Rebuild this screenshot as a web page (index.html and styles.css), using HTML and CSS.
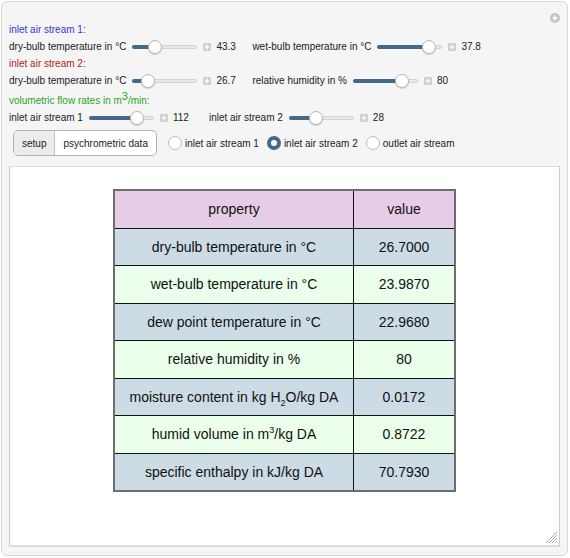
FILE: index.html
```html
<!DOCTYPE html>
<html lang="en">
<head>
    <meta charset="UTF-8">
    <title>Psychrometric Data</title>
    <link rel="stylesheet" href="styles.css">
</head>
<body>
    <div class="panel">
        <svg class="add-btn" width="10" height="10" viewBox="0 0 10 10">
            <circle cx="5" cy="5" r="5" fill="#c4c4c4"/>
            <path d="M5 2.5v5M2.5 5h5" stroke="#fff" stroke-width="1.6"/>
        </svg>

        <div class="controls">
            <div class="heading blue">inlet air stream 1:</div>
            <div class="row">
                <div class="control">
                    <span class="label">dry-bulb temperature in °C</span>
                    <div class="slider"><div class="fill" style="width:23px"></div><div class="thumb" style="left:16px"></div></div>
                    <svg class="plus" width="8" height="8" viewBox="0 0 8 8"><rect width="8" height="8" rx="1" fill="#cfcfcf"/><path d="M4 1.5v5M1.5 4h5" stroke="#fff" stroke-width="1.2"/></svg>
                    <span class="value">43.3</span>
                </div>
                <div class="control">
                    <span class="label">wet-bulb temperature in °C</span>
                    <div class="slider"><div class="fill" style="width:52px"></div><div class="thumb" style="left:45px"></div></div>
                    <svg class="plus" width="8" height="8" viewBox="0 0 8 8"><rect width="8" height="8" rx="1" fill="#cfcfcf"/><path d="M4 1.5v5M1.5 4h5" stroke="#fff" stroke-width="1.2"/></svg>
                    <span class="value">37.8</span>
                </div>
            </div>

            <div class="heading red">inlet air stream 2:</div>
            <div class="row">
                <div class="control">
                    <span class="label">dry-bulb temperature in °C</span>
                    <div class="slider"><div class="fill" style="width:16px"></div><div class="thumb" style="left:9px"></div></div>
                    <svg class="plus" width="8" height="8" viewBox="0 0 8 8"><rect width="8" height="8" rx="1" fill="#cfcfcf"/><path d="M4 1.5v5M1.5 4h5" stroke="#fff" stroke-width="1.2"/></svg>
                    <span class="value">26.7</span>
                </div>
                <div class="control">
                    <span class="label">relative humidity in %</span>
                    <div class="slider"><div class="fill" style="width:49px"></div><div class="thumb" style="left:42px"></div></div>
                    <svg class="plus" width="8" height="8" viewBox="0 0 8 8"><rect width="8" height="8" rx="1" fill="#cfcfcf"/><path d="M4 1.5v5M1.5 4h5" stroke="#fff" stroke-width="1.2"/></svg>
                    <span class="value">80</span>
                </div>
            </div>

            <div class="heading green flow">volumetric flow rates in m<sup>3</sup>/min:</div>
            <div class="row">
                <div class="control">
                    <span class="label">inlet air stream 1</span>
                    <div class="slider"><div class="fill" style="width:48px"></div><div class="thumb" style="left:41px"></div></div>
                    <svg class="plus" width="8" height="8" viewBox="0 0 8 8"><rect width="8" height="8" rx="1" fill="#cfcfcf"/><path d="M4 1.5v5M1.5 4h5" stroke="#fff" stroke-width="1.2"/></svg>
                    <span class="value">112</span>
                </div>
                <div class="control">
                    <span class="label">inlet air stream 2</span>
                    <div class="slider"><div class="fill" style="width:27px"></div><div class="thumb" style="left:20px"></div></div>
                    <svg class="plus" width="8" height="8" viewBox="0 0 8 8"><rect width="8" height="8" rx="1" fill="#cfcfcf"/><path d="M4 1.5v5M1.5 4h5" stroke="#fff" stroke-width="1.2"/></svg>
                    <span class="value">28</span>
                </div>
            </div>
        </div>

        <div class="tabs-row">
            <div class="tabs">
                <span class="tab tab-setup">setup</span>
                <span class="tab">psychrometric data</span>
            </div>
            <div class="radios">
                <span class="radio"><span class="circle"></span>inlet air stream 1</span>
                <span class="radio"><span class="circle checked"></span>inlet air stream 2</span>
                <span class="radio"><span class="circle"></span>outlet air stream</span>
            </div>
        </div>

        <div class="output">
            <table class="data">
                <tr class="head"><td>property</td><td class="val">value</td></tr>
                <tr class="blue-row"><td>dry-bulb temperature in °C</td><td class="val">26.7000</td></tr>
                <tr class="green-row"><td>wet-bulb temperature in °C</td><td class="val">23.9870</td></tr>
                <tr class="blue-row"><td>dew point temperature in °C</td><td class="val">22.9680</td></tr>
                <tr class="green-row"><td>relative humidity in %</td><td class="val">80</td></tr>
                <tr class="blue-row"><td>moisture content in kg H<sub>2</sub>O/kg DA</td><td class="val">0.0172</td></tr>
                <tr class="green-row"><td>humid volume in m<sup>3</sup>/kg DA</td><td class="val">0.8722</td></tr>
                <tr class="blue-row"><td>specific enthalpy in kJ/kg DA</td><td class="val">70.7930</td></tr>
            </table>
            <svg class="grip" width="12" height="12" viewBox="0 0 12 12">
                <path d="M11 3L3 11M11 6L6 11M11 9L9 11M11 0L0 11" stroke="#aaa" stroke-width="1"/>
            </svg>
        </div>
    </div>
</body>
</html>
```

FILE: styles.css
```css
body {
    margin: 0;
    font-family: 'Liberation Sans', Arial, sans-serif;
    background-color: #ffffff;
}
.panel {
    position: relative;
    box-sizing: border-box;
    width: 567px;
    height: 555px;
    margin: 1px;
    padding: 19px 7px 8px 7px;
    background-color: #f5f5f5;
    border: 1px solid #d9d9d9;
    border-radius: 6px;
    display: flex;
    flex-direction: column;
}
.add-btn {
    position: absolute;
    top: 11px;
    right: 7px;
}
.controls {
    font-size: 10px;
    color: #222;
}
.heading {
    height: 17px;
    line-height: 17px;
}
.heading.flow {
    margin-top: 3px;
}
.heading sup {
    font-size: 11px;
    line-height: 0;
    vertical-align: 4px;
}
.blue {
    color: #3535d0;
}
.red {
    color: #b32222;
}
.green {
    color: #26a626;
}
.row {
    height: 17px;
    display: flex;
    align-items: center;
    gap: 6px;
}
.control {
    display: flex;
    align-items: center;
}
.label {
    margin-right: 6px;
    white-space: nowrap;
}
.slider {
    position: relative;
    width: 65px;
    height: 16px;
    margin-right: 6px;
}
.slider::before {
    content: "";
    position: absolute;
    left: 0;
    right: 0;
    top: 6px;
    height: 4px;
    box-sizing: border-box;
    background-color: #e8e8e8;
    border: 1px solid #d4d4d4;
    border-radius: 2px;
}
.fill {
    position: absolute;
    left: 0;
    top: 6px;
    height: 4px;
    background-color: #436a8b;
    border-radius: 2px;
}
.thumb {
    position: absolute;
    top: 1px;
    width: 14px;
    height: 14px;
    box-sizing: border-box;
    background-color: #fff;
    border: 1px solid #b8b8b8;
    border-radius: 50%;
    box-shadow: 0 1px 1px rgba(0, 0, 0, 0.15);
}
.plus {
    margin-right: 5px;
}
.value {
    width: 30px;
}
.tabs-row {
    margin-top: 4px;
    padding-left: 4px;
    height: 26px;
    display: flex;
    align-items: center;
    gap: 11px;
    font-size: 10px;
    color: #222;
}
.tabs {
    display: flex;
    height: 26px;
    box-sizing: border-box;
    border: 1px solid #b3b3b3;
    border-radius: 5px;
    overflow: hidden;
    background-color: #fff;
}
.tab {
    display: flex;
    align-items: center;
    padding: 0 8px;
}
.tab-setup {
    background-color: #ececec;
    border-right: 1px solid #c4c4c4;
}
.radios {
    display: flex;
    align-items: center;
    gap: 8px;
}
.radio {
    display: flex;
    align-items: center;
    gap: 3px;
}
.circle {
    width: 14px;
    height: 14px;
    box-sizing: border-box;
    border: 1px solid #bcbcbc;
    border-radius: 50%;
    background-color: #fff;
}
.circle.checked {
    border: 4.5px solid #436a8b;
    background-color: #fff;
}
.output {
    position: relative;
    flex: 1;
    margin-top: 10px;
    padding-top: 22px;
    background-color: #fff;
    border: 1px solid #cccccc;
    border-top-color: #dddddd;
    border-bottom: 2px solid #dddddd;
}
.data {
    margin: 0 auto;
    border-collapse: collapse;
    border: 2px solid #6e6e6e;
    font-size: 14px;
    color: #111;
}
.data td {
    width: 238px;
    height: 36.5px;
    padding: 0;
    text-align: center;
    border: 1px solid #111;
}
.data td.val {
    width: 100px;
}
.data sub, .data sup {
    font-size: 9px;
    line-height: 0;
}
.head td {
    background-color: #e6cce6;
}
.blue-row td {
    background-color: #ccdbe4;
}
.green-row td {
    background-color: #ebffeb;
}
.grip {
    position: absolute;
    right: 1px;
    bottom: 1px;
}
```
